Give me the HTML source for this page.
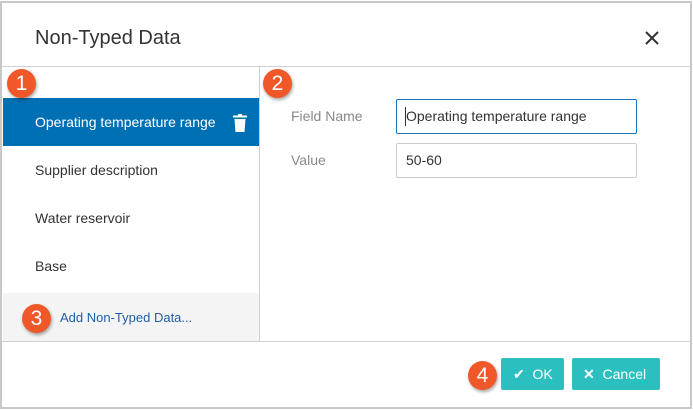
<!DOCTYPE html>
<html><head><meta charset="utf-8"><style>
*{box-sizing:border-box;margin:0;padding:0}
body{width:693px;height:410px;background:#fff;font-family:"Liberation Sans",sans-serif;position:relative;overflow:hidden}
.dlg{position:absolute;left:0;top:1px;width:692px;height:408px;border:2px solid #c8c8c8;background:#fff}
.abs{position:absolute}
.title{left:35px;top:27px;font-size:20px;color:#333}
.hline{left:2px;width:688px;height:1px;background:#d0d0d0}
.item{position:absolute;left:3px;width:256px;height:48px;font-size:14px;color:#333;padding-left:32px;line-height:48px}
.sel{background:#0070b4;color:#fff}
.badge{position:absolute;width:29px;height:29px;border-radius:50%;background:#f0582a;color:#fff;font-size:21px;text-align:center;line-height:29px;box-shadow:1px 2px 3px rgba(0,0,0,.35)}
.lbl{position:absolute;left:291px;font-size:14px;color:#888}
.inp{position:absolute;left:396px;width:241px;height:35px;border:1px solid #ccc;border-radius:2px;font-size:14px;color:#333;padding-left:9px;line-height:33px}
.btn{position:absolute;top:358px;height:32px;background:#2bbfbf;color:#fff;font-size:14px;line-height:32px;border-radius:2px}
</style></head><body>
<div class="dlg"></div>
<div class="abs title">Non-Typed Data</div>
<svg class="abs" style="left:644px;top:30px" width="16" height="16"><path d="M2 2L14 14M14 2L2 14" stroke="#333" stroke-width="2"/></svg>
<div class="abs hline" style="top:66px"></div>
<div class="abs" style="left:259px;top:67px;width:1px;height:274px;background:#d0d0d0"></div>
<div class="item sel" style="top:98px">Operating temperature range</div>
<svg class="abs" style="left:233px;top:114px" width="14" height="18"><rect x="0" y="1.5" width="14" height="2" fill="#fff"/><rect x="5" y="0" width="4" height="2" fill="#fff"/><path d="M1.5 5H12.5L11.5 18H2.5Z" fill="#fff"/></svg>
<div class="item" style="top:146px">Supplier description</div>
<div class="item" style="top:194px">Water reservoir</div>
<div class="item" style="top:242px">Base</div>
<div class="abs" style="left:3px;top:293px;width:256px;height:48px;background:#f4f4f4"></div>
<div class="abs" style="left:60px;top:310px;font-size:13px;color:#1f5fa8">Add Non-Typed Data...</div>
<div class="abs hline" style="top:341px"></div>
<div class="lbl" style="top:108px">Field Name</div>
<div class="lbl" style="top:152px">Value</div>
<div class="inp" style="top:99px;border-color:#1b74b8">Operating temperature range</div>
<div class="abs" style="left:405px;top:107px;width:1px;height:19px;background:#333"></div>
<div class="inp" style="top:143px">50-60</div>
<div class="btn" style="left:501px;width:63px;padding-left:12px">✔&nbsp; OK</div>
<div class="btn" style="left:572px;width:88px;padding-left:11px"><b>✕</b>&nbsp; Cancel</div>
<div class="badge" style="left:7px;top:69px">1</div>
<div class="badge" style="left:263px;top:69px">2</div>
<div class="badge" style="left:22px;top:304px">3</div>
<div class="badge" style="left:468px;top:361px">4</div>
</body></html>
